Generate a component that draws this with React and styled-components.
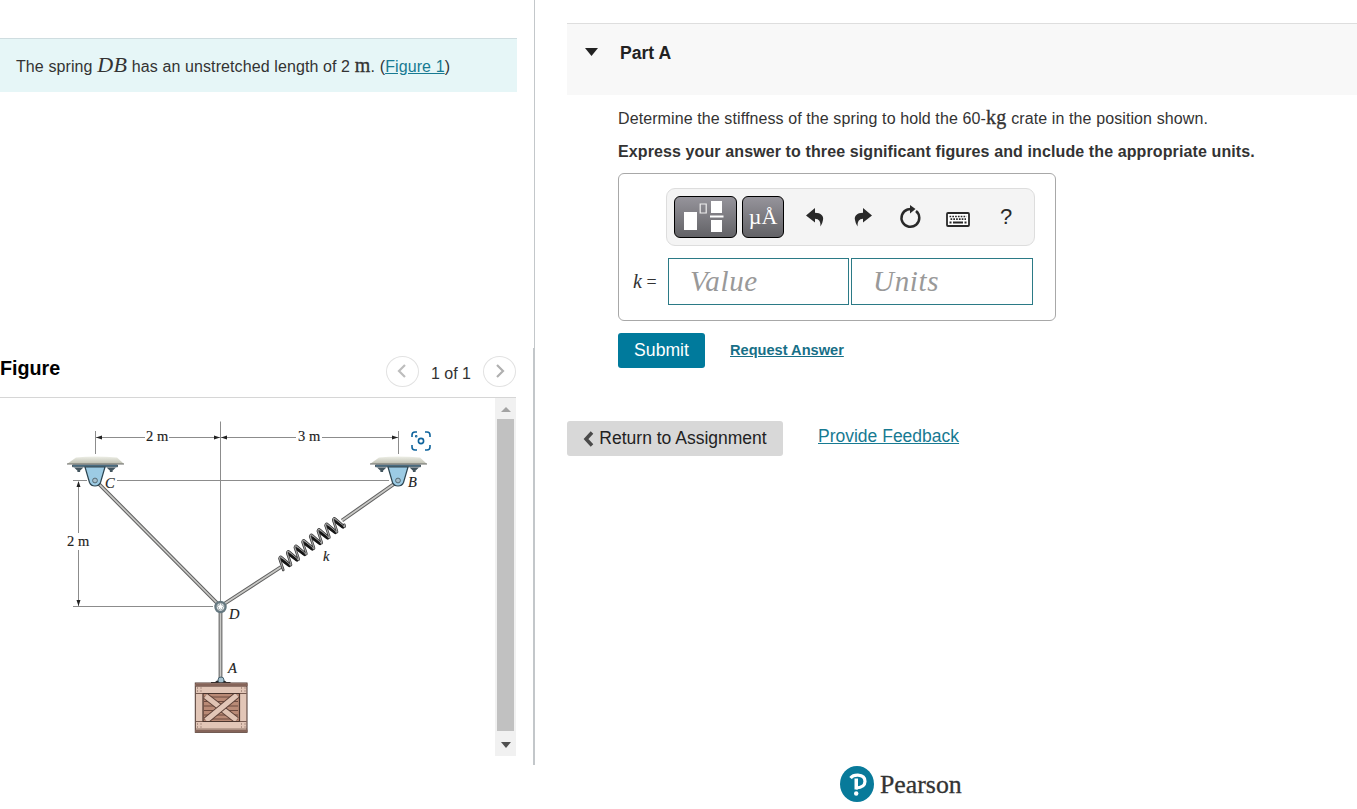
import styled, { createGlobalStyle } from "styled-components";

const coils = Array.from({ length: 8 }, (_, i) => ({
    x: 280.3 + i * 7.67,
    y: 556.5 - i * 5.5,
}));

const coilPath = 'M283.3 570 ' + coils
    .map(({ x, y }) => `L${x - 0.8} ${y + 2} Q${x - 0.3} ${y - 0.8} ${x + 1.4} ${y + 1} L${x + 9.8} ${y + 8.3} Q${x + 11.3} ${y + 9.3} ${x + 10.4} ${y + 6.8}`)
    .join(' ');

const Support = ({ x }) => (
    <g transform={`translate(${x} 0)`}>
        <path d="M-28 464 L-19 457.5 Q0 455.5 22 457.5 L29 464 Z" fill="url(#ceiling)" />
        <path d="M-28 464 H29" stroke="#6d6f6a" strokeWidth="1.2" />
        <path d="M-22.500 465 H22.500 V466.800 H-22.500 Z" fill="#5c8ba6" stroke="#25333b" strokeWidth="0.7" />
        <path d="M-19.500 468 h6.500 l-2 2 h-.5 v1.500 h-1.500 v-1.500 h-.5 z M13 468 h6.500 l-2 2 h-.5 v1.500 h-1.500 v-1.500 h-.5 z" fill="#43555e" stroke="#43555e" strokeWidth="1.2" />
        <path d="M-10 467 L-5.500 482.500 Q-4 486 0 486 Q4 486 5.500 482.500 L10 467 Z" fill="#9ccbe4" stroke="#2c4450" strokeWidth="1.200" />
        <circle cx="0" cy="480.500" r="2.400" fill="#a5bfcd" stroke="#4d616b" strokeWidth="0.9" />
    </g>
);

const Crate = () => (
    <g>
        <rect x="195.300" y="683" width="51.700" height="49.300" fill="#e2c6b7" stroke="#4a352e" strokeWidth="1" />
        <rect x="203" y="693.500" width="36.500" height="28" fill="#b98a76" />
        <path d="M204 697 h34 M204 701.500 h34 M204 706 h34 M204 710.500 h34 M204 715 h34 M204 719 h34" stroke="#6d4a3f" strokeWidth="1" />
        <path d="M205.500 696 L236.500 720" stroke="#5c4037" strokeWidth="6.800" />
        <path d="M205.500 696 L236.500 720" stroke="#e0c3b3" strokeWidth="5" />
        <path d="M206 720.500 L237 695" stroke="#5c4037" strokeWidth="6.800" />
        <path d="M206 720.500 L237 695" stroke="#e2c6b7" strokeWidth="5" />
        <path d="M200 691 H242 V724 H200 Z" fill="none" stroke="#e2c6b7" strokeWidth="4" />
        <path d="M203 693.500 H239.500 V721.500 H203 Z" fill="none" stroke="#4a352e" strokeWidth="1.200" />
        <path d="M196 686.500 H247 M196 729 H247" stroke="#5c4037" strokeWidth="0.6" />
        <path d="M195 684.700 H247.500 M195 731 H247.500" stroke="#856459" strokeWidth="2.600" />
        <path d="M196 693.500 H203 M239.500 693.500 H246.500 M196 721.500 H203 M239.500 721.500 H246.500" stroke="#5c4037" strokeWidth="0.8" />
        <g fill="#7d6259">
            {[197.500, 201, 241.500, 245].map((x) =>
                [688, 691, 724, 727].map((y) => <rect key={`${x}${y}`} x={x - 0.5} y={y - 0.5} width="1" height="1" />)
            )}
        </g>
    </g>
);

const SpringDiagram = () => (
    <Diagram viewBox="0 398 495 358">
        <defs>
            <linearGradient id="ceiling" x1="0" y1="0" x2="0" y2="1">
                <stop offset="0" stopColor="#eeefe6" />
                <stop offset="1" stopColor="#bcbdb0" />
            </linearGradient>
        </defs>
        <g stroke="#8c8c8c" strokeWidth="1" fill="none">
            <path d="M95.5 431 V454 M220.5 421.5 V602 M398.5 431 V454" />
            <path d="M96 437.5 H145 M169 437.5 H296 M322 437.5 H398" />
            <path d="M73 480.5 H87 M117 480.5 H389 M73 606.5 H213" />
            <path d="M78.5 482 V533 M78.5 550 V606" />
        </g>
        <g fill="#222">
            <path d="M96 437.5 l6 -2 v4 z M220 437.5 l-6 -2 v4 z M221 437.5 l6 -2 v4 z M398 437.5 l-6 -2 v4 z" />
            <path d="M78.5 481 l-2 6 h4 z M78.5 606 l-2 -6 h4 z" />
        </g>
        <g fill="none">
            <path d="M99 484 L217 603 M224 604 L281 567 M342 520.5 L394 484 M220.5 612 V679" stroke="#626262" strokeWidth="3.8" />
            <path d="M99 484 L217 603 M224 604 L281 567 M342 520.5 L394 484 M220.5 612 V679" stroke="#c9c9c6" strokeWidth="1.7" />
        </g>
        <Support x={95} />
        <Support x={398} />
        <g fill="none" strokeLinecap="round" strokeLinejoin="round">
            {coils.map(({ x, y }) => (
                <path key={x} d={`M${x + 1} ${y + 3} L${x + 9} ${y + 9}`} stroke="#151515" strokeWidth="3.4" />
            ))}
            <path d={coilPath} stroke="#333" strokeWidth="2.5" />
            <path d={coilPath} stroke="#a6a6a6" strokeWidth="1.1" />
            {coils.map(({ x, y }) => (
                <path key={x} d={`M${x + 2} ${y + 3.6} L${x + 8} ${y + 8.4}`} stroke="#151515" strokeWidth="2" />
            ))}
        </g>
        <circle cx="220.5" cy="607" r="5" fill="#e8eef0" stroke="#657880" strokeWidth="2.4" />
        <path d="M220.5 602 l1.2 3.2 3.5 .2 -2.8 2 1 3.4 -2.9 -2 -2.9 2 1 -3.4 -2.8 -2 3.5 -.2 z" fill="#fff" stroke="#5b686d" strokeWidth="0.5" />
        <path d="M211 683.5 v-1.500 h4 l2 -1.500 h7.500 l2 1.500 h4 v1.500 z" fill="#25292b" />
        <circle cx="221" cy="680" r="3" fill="#a8c3d0" stroke="#47606d" />
        <Crate />
        <DiagramText x="146" y="441">2 m</DiagramText>
        <DiagramText x="298" y="441">3 m</DiagramText>
        <DiagramText x="67" y="546">2 m</DiagramText>
        <DiagramText x="105" y="487.5" $italic>C</DiagramText>
        <DiagramText x="408" y="487" $italic>B</DiagramText>
        <DiagramText x="323" y="561" $italic>k</DiagramText>
        <DiagramText x="229" y="619" $italic>D</DiagramText>
        <DiagramText x="228" y="673" $italic>A</DiagramText>
    </Diagram>
);

const App = () => {
    return (
        <>
            <GlobalStyle />
            <Page>
                <LeftColumn>
                    <Intro>
                        The spring <MathText $italic>DB</MathText> has an unstretched length of 2 <MathText $unit>m</MathText>. (<Link href="#figure">Figure 1</Link>)
                    </Intro>
                    <FigurePanel id="figure">
                        <FigureHeader>
                            <FigureTitle>Figure</FigureTitle>
                            <Pager>
                                <PagerButton aria-label="Previous">
                                    <svg width="10" height="14" viewBox="0 0 10 14"><path d="M8 1 L2 7 L8 13" fill="none" stroke="#bdbdbd" strokeWidth="2.2" /></svg>
                                </PagerButton>
                                <PagerLabel>1 of 1</PagerLabel>
                                <PagerButton aria-label="Next">
                                    <svg width="10" height="14" viewBox="0 0 10 14"><path d="M2 1 L8 7 L2 13" fill="none" stroke="#b0b0b0" strokeWidth="2.2" /></svg>
                                </PagerButton>
                            </Pager>
                        </FigureHeader>
                        <FigureBody>
                            <SpringDiagram />
                            <LensButton viewBox="0 0 20 20">
                                <path d="M1 6 V4 Q1 1 4 1 H6 M14 1 H16 Q19 1 19 4 V6 M19 14 V16 Q19 19 16 19 H14 M6 19 H4 Q1 19 1 16 V14" />
                                <circle cx="10" cy="10" r="2.6" />
                                <circle cx="5.2" cy="5.2" r="0.5" />
                            </LensButton>
                            <Scrollbar>
                                <svg width="10" height="5"><path d="M0 5 L5 0 L10 5 Z" fill="#a3a3a3" /></svg>
                                <Thumb />
                                <svg width="10" height="6"><path d="M0 0 L5 6 L10 0 Z" fill="#505050" /></svg>
                            </Scrollbar>
                        </FigureBody>
                    </FigurePanel>
                </LeftColumn>
                <RightColumn>
                    <PartHeader>
                        <svg width="13" height="8"><path d="M0 0 H13 L6.5 8 Z" fill="#222" /></svg>
                        <PartTitle>Part A</PartTitle>
                    </PartHeader>
                    <PartBody>
                        <Question>
                            Determine the stiffness of the spring to hold the 60-<MathText $unit>kg</MathText> crate in the position shown.
                        </Question>
                        <Instruction>Express your answer to three significant figures and include the appropriate units.</Instruction>
                        <AnswerBox>
                            <Toolbar>
                                <DarkButton $width={63} aria-label="Templates">
                                    <TemplateIcon width="40" height="32" viewBox="0 0 40 32">
                                        <path d="M0 12 H13 V30 H0 Z M27 1 H38 V13 H27 Z M27 20 H38 V32 H27 Z M26 15.500 H39.500 V17.500 H26 Z" fill="#fff" />
                                        <path d="M16.200 4 H22.200 V13 H16.200 Z" fill="none" stroke="#eee" strokeWidth="1.2" />
                                    </TemplateIcon>
                                </DarkButton>
                                <DarkButton $width={42}>µÅ</DarkButton>
                                <ToolIcons>
                                    <svg width="18" height="19" viewBox="0 0 18 19"><path d="M0 7.500 L9 0 V4.700 C15 4.700 18 8 17 12 Q16.500 15.500 14.500 18.500 Q15 11 9 10.800 V14.500 Z" fill="#292929" /></svg>
                                    <svg width="18" height="19" viewBox="0 0 18 19"><path d="M18 7.500 L9 0 V4.700 C3 4.700 0 8 1 12 Q1.500 15.500 3.500 18.500 Q3 11 9 10.800 V14.500 Z" fill="#292929" /></svg>
                                    <svg width="22" height="24" viewBox="0 0 22 24"><path d="M17 6 A8.900 8.900 0 1 1 8.500 4.500 L12 4" fill="none" stroke="#292929" strokeWidth="2.500" /><path d="M11 0 L16.500 4 L11 8.500 Z" fill="#292929" /></svg>
                                    <KeyboardIcon width="24" height="15" viewBox="0 0 24 15">
                                        <rect x="1" y="1" width="22" height="13" rx="1" fill="#fff" stroke="#292929" strokeWidth="1.800" />
                                        <path d="M3.500 4.500 H20.500 M4.500 7.200 H20" stroke="#292929" strokeWidth="1.700" strokeDasharray="1.700 1.100" />
                                        <path d="M3.500 10.500 H5.500 M7 10.500 H17 M18.500 10.500 H20.500" stroke="#292929" strokeWidth="1.800" />
                                    </KeyboardIcon>
                                    <Help>?</Help>
                                </ToolIcons>
                            </Toolbar>
                            <Fields>
                                <FieldLabel><i>k</i> =</FieldLabel>
                                <Field $width={181} placeholder="Value" />
                                <Field $width={182} placeholder="Units" />
                            </Fields>
                        </AnswerBox>
                        <Actions>
                            <SubmitButton>Submit</SubmitButton>
                            <RequestLink href="#answer">Request Answer</RequestLink>
                        </Actions>
                    </PartBody>
                    <BottomActions>
                        <ReturnButton>
                            <svg width="11" height="16" viewBox="0 0 11 16"><path d="M9 1.500 L3 8 L9 14.500" fill="none" stroke="#4a4a4a" strokeWidth="3.500" /></svg>
                            Return to Assignment
                        </ReturnButton>
                        <FeedbackLink href="#feedback">Provide Feedback</FeedbackLink>
                    </BottomActions>
                    <Footer>
                        <svg width="34" height="36" viewBox="0 0 34 36">
                            <ellipse cx="17" cy="18" rx="17" ry="18" fill="#087a9a" />
                            <path d="M10.500 12 Q13 9 18 9.200 Q25 9.500 25 15.500 Q24.800 21.500 16 22" fill="none" stroke="#fff" strokeWidth="3.200" />
                            <path d="M14.500 12.500 H18 V23.500 H14.500 Z" fill="#fff" />
                            <circle cx="16.200" cy="27.500" r="2.200" fill="#fff" />
                        </svg>
                        <Brand>Pearson</Brand>
                    </Footer>
                </RightColumn>
            </Page>
        </>
    );
};

const GlobalStyle = createGlobalStyle`
    body {
        margin: 0;
        background: #fff;
        color: #333;
        font-family: "Liberation Sans", Arial, sans-serif;
        font-size: 16px;
        overflow: hidden;
    }
    svg {
        display: block;
        flex: none;
    }
`

const Page = styled.main`
    display: flex;
    height: 809px;
`

const LeftColumn = styled.section`
    display: flex;
    flex-direction: column;
    box-sizing: border-box;
    width: 535px;
    height: 765px;
    padding-top: 38px;
    border-right: 1px solid #c3c7ca;
`

const RightColumn = styled.section`
    display: flex;
    flex-direction: column;
    flex: 1;
    padding: 23px 0 0 32px;
`

const Intro = styled.div`
    box-sizing: border-box;
    width: 517px;
    height: 54px;
    padding: 1px 0 0 16px;
    border-top: 1px solid #cfdde0;
    background: #e6f6f7;
    letter-spacing: 0.1px;
    line-height: 53px;
    white-space: nowrap;
`

const MathText = styled.span`
    font-family: "Liberation Serif", "Times New Roman", serif;
    font-size: ${props => props.$italic ? '22px' : '20px'};
    font-style: ${props => props.$italic ? 'italic' : 'normal'};
    letter-spacing: 0.4px;
    line-height: 1;
    -webkit-text-stroke: ${props => props.$unit ? '0.3px' : '0'};
`

const Link = styled.a`
    color: #177a92;
`

const FigurePanel = styled.div`
    display: flex;
    flex-direction: column;
    height: 417px;
    margin-top: auto;
    border-right: 1px solid #c3c7ca;
`

const FigureHeader = styled.div`
    display: flex;
    align-items: center;
    justify-content: space-between;
    box-sizing: border-box;
    width: 516px;
    height: 50px;
    border-bottom: 1px solid #d6d6d6;
`

const FigureTitle = styled.h2`
    margin: 0;
    padding-bottom: 9px;
    color: #000;
    font-size: 19.7px;
    line-height: 22px;
`

const Pager = styled.div`
    display: flex;
    align-items: center;
    gap: 12px;
    padding-bottom: 3px;
`

const PagerButton = styled.button`
    display: flex;
    align-items: center;
    justify-content: center;
    box-sizing: border-box;
    width: 33px;
    height: 31px;
    padding: 0;
    border: 1px solid #e2e2e2;
    border-radius: 50%;
    background: #fff;
`

const PagerLabel = styled.span`
    padding-top: 5px;
    line-height: 18px;
`

const FigureBody = styled.div`
    display: flex;
    position: relative;
    width: 516px;
    height: 358px;
`

const Diagram = styled.svg`
    width: 495px;
    height: 358px;
`

const DiagramText = styled.text`
    fill: #222;
    font-family: "Liberation Serif", "Times New Roman", serif;
    font-size: 14.5px;
    font-style: ${props => props.$italic ? 'italic' : 'normal'};
    stroke: #222;
    stroke-width: 0.15px;
`

const LensButton = styled.svg`
    position: absolute;
    left: 411px;
    top: 33px;
    width: 20px;
    height: 20px;
    fill: none;
    stroke: #0e639c;
    stroke-width: 1.6;
`

const Scrollbar = styled.div`
    display: flex;
    flex-direction: column;
    align-items: center;
    box-sizing: border-box;
    width: 21px;
    padding: 9px 0 8px;
    background: #f1f1f1;
`

const Thumb = styled.div`
    flex: 1;
    width: 17px;
    margin: 7px 0 11px;
    background: #c1c1c1;
`

const PartHeader = styled.header`
    display: flex;
    gap: 22px;
    box-sizing: border-box;
    height: 72px;
    padding: 24px 0 0 18px;
    border-top: 1px solid #dedede;
    background: #f8f8f8;
`

const PartTitle = styled.h1`
    margin: -5px 0 0;
    color: #222;
    font-size: 17.6px;
    line-height: 20px;
`

const PartBody = styled.div`
    padding: 12px 0 0 51px;
`

const Question = styled.p`
    margin: 0;
    letter-spacing: 0.1px;
    line-height: 20px;
    white-space: nowrap;
`

const Instruction = styled.p`
    margin: 13px 0 11px;
    font-weight: bold;
    letter-spacing: 0.11px;
    line-height: 20px;
    white-space: nowrap;
`

const AnswerBox = styled.div`
    box-sizing: border-box;
    width: 438px;
    height: 148px;
    padding: 14px 0 0 13px;
    border: 1px solid #a8a8a8;
    border-radius: 6px;
`

const Toolbar = styled.div`
    display: flex;
    align-items: center;
    gap: 5px;
    box-sizing: border-box;
    width: 369px;
    height: 58px;
    margin-left: 34px;
    padding-left: 7px;
    border: 1px solid #ddd;
    border-radius: 9px;
    background: #f4f4f4;
`

const DarkButton = styled.button`
    display: flex;
    align-items: center;
    justify-content: center;
    box-sizing: border-box;
    width: ${props => props.$width}px;
    height: 42px;
    padding: 0;
    border: 1px solid #000;
    border-radius: 6px;
    background: linear-gradient(#96949b, #626266);
    color: #fff;
    font-family: "Liberation Serif", "Times New Roman", serif;
    font-size: 22px;
    line-height: 22px;
`

const TemplateIcon = styled.svg`
    margin: 0 3px 2px 0;
`

const ToolIcons = styled.div`
    display: grid;
    grid-template-columns: repeat(5, 47.8px);
    align-items: center;
    justify-items: center;
    margin-left: 2px;
`

const KeyboardIcon = styled.svg`
    margin: 4px 1px 0 0;
`

const Help = styled.span`
    color: #292929;
    font-size: 22px;
    line-height: 22px;
`

const Fields = styled.div`
    display: flex;
    align-items: center;
    gap: 2px;
    margin-top: 12px;
`

const FieldLabel = styled.label`
    width: 33px;
    padding-left: 1px;
    font-family: "Liberation Serif", "Times New Roman", serif;
    font-size: 18px;
    white-space: nowrap;

    i{
        font-size: 20px;
    }
`

const Field = styled.input`
    box-sizing: border-box;
    width: ${props => props.$width}px;
    height: 47px;
    padding: 0 0 1px 21px;
    border: 1px solid #2b7a86;
    border-radius: 0;
    outline: 0;
    font-family: "Liberation Serif", "Times New Roman", serif;
    font-size: 29px;
    font-style: italic;
    letter-spacing: 0.7px;

    &::placeholder{
        color: #999;
    }
`

const Actions = styled.div`
    display: flex;
    align-items: center;
    gap: 25px;
    margin-top: 12px;
`

const SubmitButton = styled.button`
    width: 87px;
    height: 35px;
    padding: 0;
    border: 0;
    border-radius: 3px;
    background: #007a9c;
    color: #fff;
    font-family: inherit;
    font-size: 17.6px;
    cursor: pointer;
`

const RequestLink = styled.a`
    padding-bottom: 2px;
    color: #176f87;
    font-size: 14.6px;
    font-weight: bold;
`

const BottomActions = styled.div`
    display: flex;
    gap: 35px;
    margin-top: 53px;
`

const ReturnButton = styled.button`
    display: flex;
    align-items: center;
    justify-content: center;
    gap: 5px;
    width: 216px;
    height: 35px;
    padding: 0;
    border: 0;
    border-radius: 3px;
    background: #d8d8d8;
    color: #222;
    font-family: inherit;
    font-size: 17.5px;
    white-space: nowrap;
`

const FeedbackLink = styled.a`
    padding-top: 5px;
    color: #177a92;
    font-size: 17.5px;
    line-height: 20px;
`

const Footer = styled.footer`
    display: flex;
    align-items: center;
    gap: 6px;
    margin: auto 0 7px 273px;
`

const Brand = styled.span`
    padding-top: 2px;
    color: #333;
    font-family: "Liberation Serif", "Times New Roman", serif;
    font-size: 25.8px;
    line-height: 30px;
    -webkit-text-stroke: 0.3px;
`

export default App
